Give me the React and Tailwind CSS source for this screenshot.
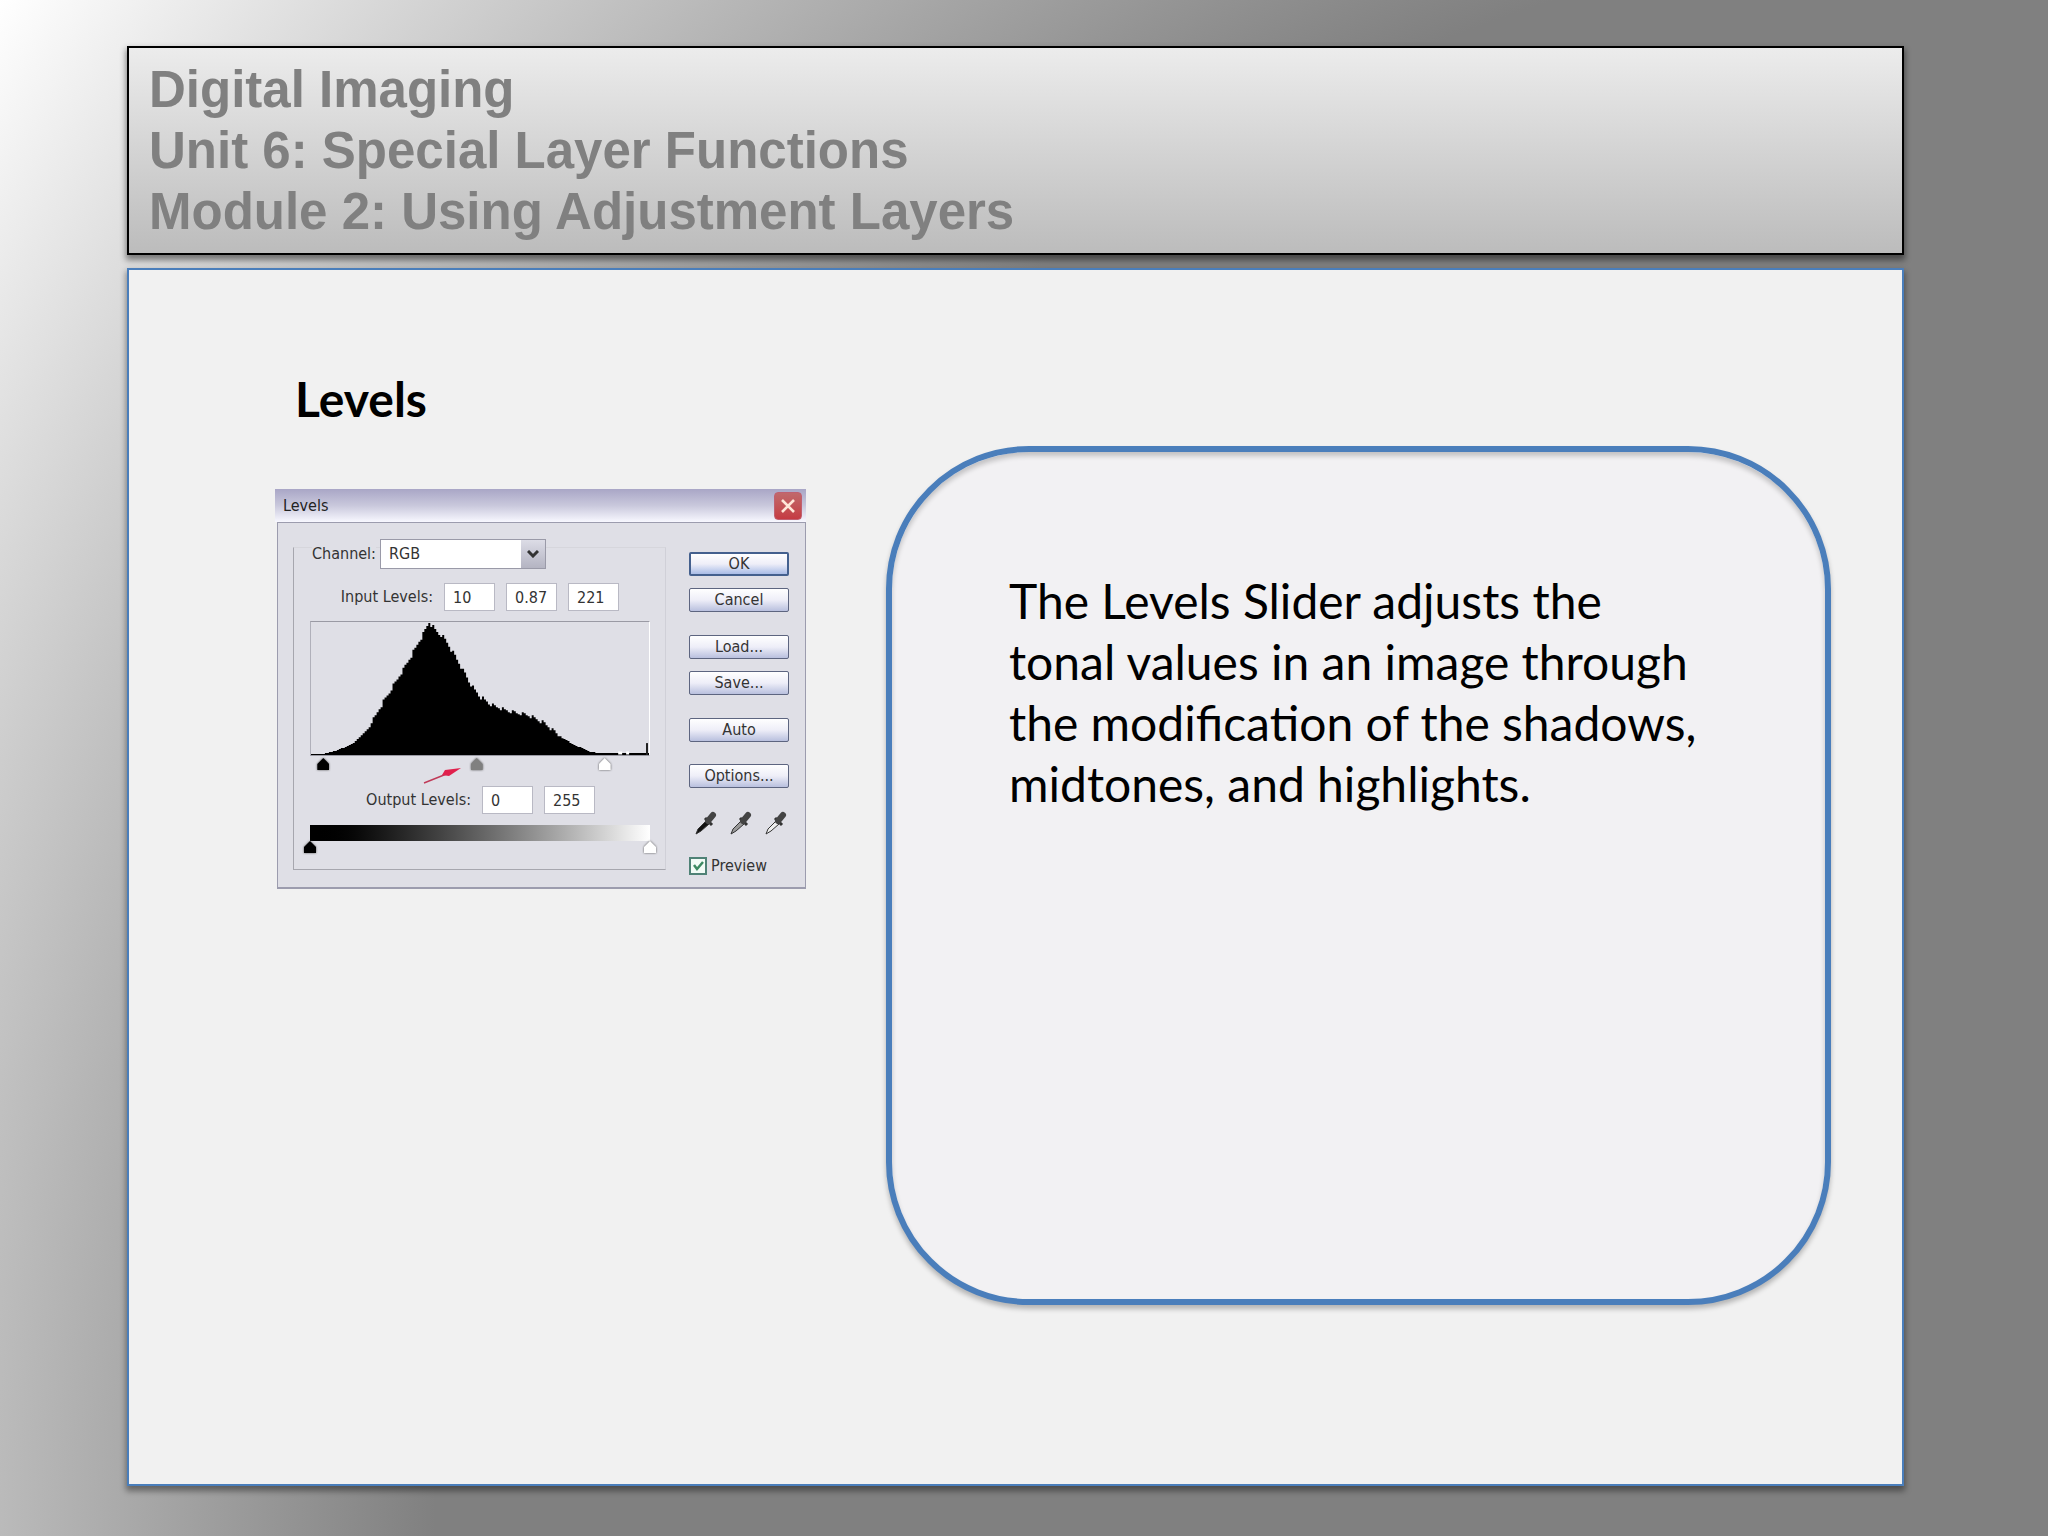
import { useState } from 'react'

// [x, height] points of the tonal curve, on a 340 x 134 canvas
const CURVE = [
  [0, 0], [12, 1], [23, 4], [34, 8], [43, 13], [58, 28], [68, 47], [79, 65], [92, 86],
  [104, 107], [112, 122], [118, 134], [124, 126], [133, 118], [148, 93], [159, 72], [168, 60],
  [181, 50], [198, 44], [218, 40], [234, 32], [251, 18], [264, 10], [281, 3], [288, 2], [340, 2],
]

function heightAt(x) {
  const i = CURVE.findIndex((p) => p[0] > x)
  const [x0, h0] = CURVE[i - 1]
  const [x1, h1] = CURVE[i]
  const h = h0 + ((h1 - h0) * (x - x0)) / (x1 - x0)
  const ripple = x > 60 && x < 250 ? ((x * 7) % 5) - 2 : 0
  return Math.max(1, Math.round(h + ripple))
}

const HISTOGRAM =
  'M0 134' +
  Array.from({ length: 170 }, (_, i) => `V${134 - heightAt(i * 2)}H${i * 2 + 2}`).join('') +
  'V134Z'

const FIELD =
  'h-7 w-[51px] border border-[#b9b9c4] bg-white pl-2 text-base leading-5 text-[#333] outline-none'

const THUMB =
  'pointer-events-none absolute inset-0 m-0 h-3 w-full appearance-none bg-transparent drop-shadow-[0_0_1px_#555] [&::-webkit-slider-thumb]:pointer-events-auto [&::-webkit-slider-thumb]:h-3 [&::-webkit-slider-thumb]:w-3 [&::-webkit-slider-thumb]:appearance-none [&::-webkit-slider-thumb]:[clip-path:polygon(50%_0,100%_50%,100%_100%,0_100%,0_50%)]'

export default function App() {
  return (
    <div className="flex min-h-screen flex-col gap-[13px] bg-[radial-gradient(circle_farthest-corner_at_100%_100%,#808080_63%,#ffffff_100%)] pt-[46px] pr-36 pb-[50px] pl-[127px]">
      <header className="border-2 border-black bg-linear-to-b from-[#ececec] to-[#bcbcbc] px-5 py-[11px] font-['Liberation_Sans',sans-serif] text-[51px] leading-[61px] font-bold text-[#808080] shadow-[0_4px_6px_1px_rgba(0,0,0,0.45)]">
        <h1>
          Digital Imaging
          <br />
          Unit 6: Special Layer Functions
          <br />
          Module 2: Using Adjustment Layers
        </h1>
      </header>

      <main className="flex flex-1 gap-20 border-2 border-[#4a7ebb] bg-[#f1f1f1] pt-[98px] pr-[71px] pb-[179px] pl-[146px] shadow-[0_4px_6px_1px_rgba(0,0,0,0.4)]">
        <section className="shrink-0">
          <h2 className="mb-[60px] pl-5 font-['Lato',sans-serif] text-5xl leading-[61px] font-bold text-black">
            Levels
          </h2>
          <LevelsDialog />
        </section>

        <section className="mt-[78px] flex-1 rounded-[143px] border-6 border-[#4a7ebb] bg-[#f2f1f3] pt-[118px] pr-[118px] pl-[117px] shadow-[0_4px_5px_rgba(0,0,0,0.25),inset_0_4px_5px_rgba(0,0,0,0.2)]">
          <p className="font-['Lato',sans-serif] text-5xl leading-[61px] text-black">
            The Levels Slider adjusts the tonal values in an image through the modification of the
            shadows, midtones, and highlights.
          </p>
        </section>
      </main>
    </div>
  )
}

function LevelsDialog() {
  const [preview, setPreview] = useState(true)

  return (
    <div
      role="dialog"
      aria-labelledby="dialog-title"
      className="w-[531px] font-['DejaVu_Sans_Condensed','DejaVu_Sans',sans-serif] text-base leading-5 text-[#333]"
    >
      <div className="flex h-[33px] items-center justify-between bg-linear-to-b from-[#a9a6c6] via-[#c9c8dc] to-[#f8f8ff] pr-1 pl-2">
        <span id="dialog-title" className="text-[#222]">
          Levels
        </span>
        <button
          type="button"
          aria-label="Close"
          className="flex h-7 w-7 items-center justify-center rounded-sm border border-[#c06070] bg-linear-to-b from-[#c0696b] to-[#c53a42]"
        >
          <svg viewBox="0 0 16 16" className="h-4 w-4" stroke="#ffe6d8" strokeWidth="2.6">
            <path d="M2 2 14 14M14 2 2 14" />
          </svg>
        </button>
      </div>

      <div className="ml-0.5 flex justify-between border border-b-2 border-[#9c9cae] bg-[#dfdfe6] pt-4 pr-4 pb-[11px] pl-[15px]">
        <div className="mt-2 mb-1.5 w-[373px] border border-t-[#d6d6dc] border-r-[#d0d0d8] border-b-[#a6a6ae] border-l-[#a6a6ae] pr-[15px] pl-4">
          <Channel />
          <InputLevels />
          <OutputLevels />
        </div>
        <Actions preview={preview} setPreview={setPreview} />
      </div>
    </div>
  )
}

function Channel() {
  return (
    <div className="-mt-[9px] flex h-[30px] items-center gap-1 pl-0.5">
      <label htmlFor="channel" className="bg-[#dfdfe6]">
        Channel:
      </label>
      <span className="relative">
        <select
          id="channel"
          className="h-[30px] w-[166px] appearance-none border border-[#9a9aa8] bg-white pl-2 text-base text-[#333]"
        >
          <option>RGB</option>
        </select>
        <span className="pointer-events-none absolute top-px right-px flex h-7 w-6 items-center justify-center bg-linear-to-b from-[#dcdce6] to-[#b4b4c2]">
          <svg viewBox="0 0 12 8" className="h-2 w-3" fill="none" stroke="#333" strokeWidth="3">
            <path d="M1 1 6 6 11 1" />
          </svg>
        </span>
      </span>
    </div>
  )
}

function InputLevels() {
  const [black, setBlack] = useState(10)
  const [mid, setMid] = useState(125)
  const [white, setWhite] = useState(221)

  return (
    <>
      <div className="mt-[14px] flex items-center justify-end gap-[11px] pr-[31px]">
        <label htmlFor="in-black">Input Levels:</label>
        <input id="in-black" className={FIELD} value={black} onChange={(e) => setBlack(e.target.value)} />
        <input aria-label="Gamma" className={FIELD} defaultValue="0.87" />
        <input aria-label="White point" className={FIELD} value={white} onChange={(e) => setWhite(e.target.value)} />
      </div>
      <div className="mt-[10px] h-[135px] border border-t-[#9a9aa4] border-r-white border-b-[#9a9aa4] border-l-[#b0b0ba]">
        <svg viewBox="0 0 340 134" preserveAspectRatio="none" className="block h-full w-full">
          <path d={HISTOGRAM} />
          <path d="M338 122v12" stroke="#222" strokeWidth="2" />
          <path d="M309 132h4M317 132h3" stroke="#fff" strokeWidth="3" />
        </svg>
      </div>
      <div className="relative -mx-1.5 mt-0.5 h-7">
        <input type="range" aria-label="Shadows" min="0" max="255" value={black} onChange={(e) => setBlack(e.target.value)} className={`${THUMB} [&::-webkit-slider-thumb]:bg-black`} />
        <input type="range" aria-label="Midtones" min="0" max="255" value={mid} onChange={(e) => setMid(e.target.value)} className={`${THUMB} [&::-webkit-slider-thumb]:bg-[#808080]`} />
        <input type="range" aria-label="Highlights" min="0" max="255" value={white} onChange={(e) => setWhite(e.target.value)} className={`${THUMB} [&::-webkit-slider-thumb]:bg-white`} />
        <svg viewBox="0 0 40 18" className="absolute top-2 left-[119px] h-[18px] w-10">
          <path d="M1 17 26 7" stroke="#c03a58" strokeWidth="1.5" />
          <path d="M38 2 22 4 19 9 26 10Z" fill="#e0204c" />
        </svg>
      </div>
    </>
  )
}

function OutputLevels() {
  const [black, setBlack] = useState(0)
  const [white, setWhite] = useState(255)

  return (
    <>
      <div className="flex items-center justify-end gap-[11px] pr-[55px]">
        <label htmlFor="out-black">Output Levels:</label>
        <input id="out-black" className={FIELD} value={black} onChange={(e) => setBlack(e.target.value)} />
        <input aria-label="Output white" className={FIELD} value={white} onChange={(e) => setWhite(e.target.value)} />
      </div>
      <div className="mt-[11px] h-4 bg-linear-to-r from-black to-white" />
      <div className="relative -mx-1.5 mb-4 h-3">
        <input type="range" aria-label="Output shadows" min="0" max="255" value={black} onChange={(e) => setBlack(e.target.value)} className={`${THUMB} [&::-webkit-slider-thumb]:bg-black`} />
        <input type="range" aria-label="Output highlights" min="0" max="255" value={white} onChange={(e) => setWhite(e.target.value)} className={`${THUMB} [&::-webkit-slider-thumb]:bg-white`} />
      </div>
    </>
  )
}

function DialogButton({ children, primary }) {
  return (
    <button
      type="button"
      className={`h-6 w-[100px] rounded-xs border bg-linear-to-b from-white via-[#eeeef8] leading-5 ${
        primary ? 'border-2 border-[#44608e] to-[#a9bce6]' : 'border-[#5d6580] to-[#b9c0de]'
      }`}
    >
      {children}
    </button>
  )
}

function Dropper({ tip }) {
  return (
    <svg viewBox="0 0 24 24" className="h-6 w-6">
      <path d="M2 23 4 18 12 10 15 13 7 20Z" fill={tip} stroke="#333" strokeWidth="1" />
      <path d="M11 7 18 14" stroke="#333" strokeWidth="3" />
      <path d="M14 10 19 4" stroke="#444" strokeWidth="6" strokeLinecap="round" />
    </svg>
  )
}

function Actions({ preview, setPreview }) {
  return (
    <div className="flex flex-col pt-[13px]">
      <div className="flex flex-col gap-3">
        <DialogButton primary>OK</DialogButton>
        <DialogButton>Cancel</DialogButton>
      </div>
      <div className="mt-[23px] flex flex-col gap-3">
        <DialogButton>Load...</DialogButton>
        <DialogButton>Save...</DialogButton>
      </div>
      <div className="mt-[23px] flex flex-col gap-[22px]">
        <DialogButton>Auto</DialogButton>
        <DialogButton>Options...</DialogButton>
      </div>
      <div className="mt-[23px] flex gap-[11px] pl-[5px]">
        <Dropper tip="#111" />
        <Dropper tip="#999" />
        <Dropper tip="#eee" />
      </div>
      <label className="mt-[21px] flex items-center gap-1">
        <span className="relative flex">
          <input
            type="checkbox"
            checked={preview}
            onChange={(e) => setPreview(e.target.checked)}
            className="h-[18px] w-[18px] appearance-none border-2 border-[#4f8276] bg-[#f2fbf6]"
          />
          {preview && (
            <svg viewBox="0 0 18 18" className="pointer-events-none absolute inset-0" fill="none" stroke="#3c8a62" strokeWidth="2.5">
              <path d="M5 8 8 12 14 5" />
            </svg>
          )}
        </span>
        Preview
      </label>
    </div>
  )
}
